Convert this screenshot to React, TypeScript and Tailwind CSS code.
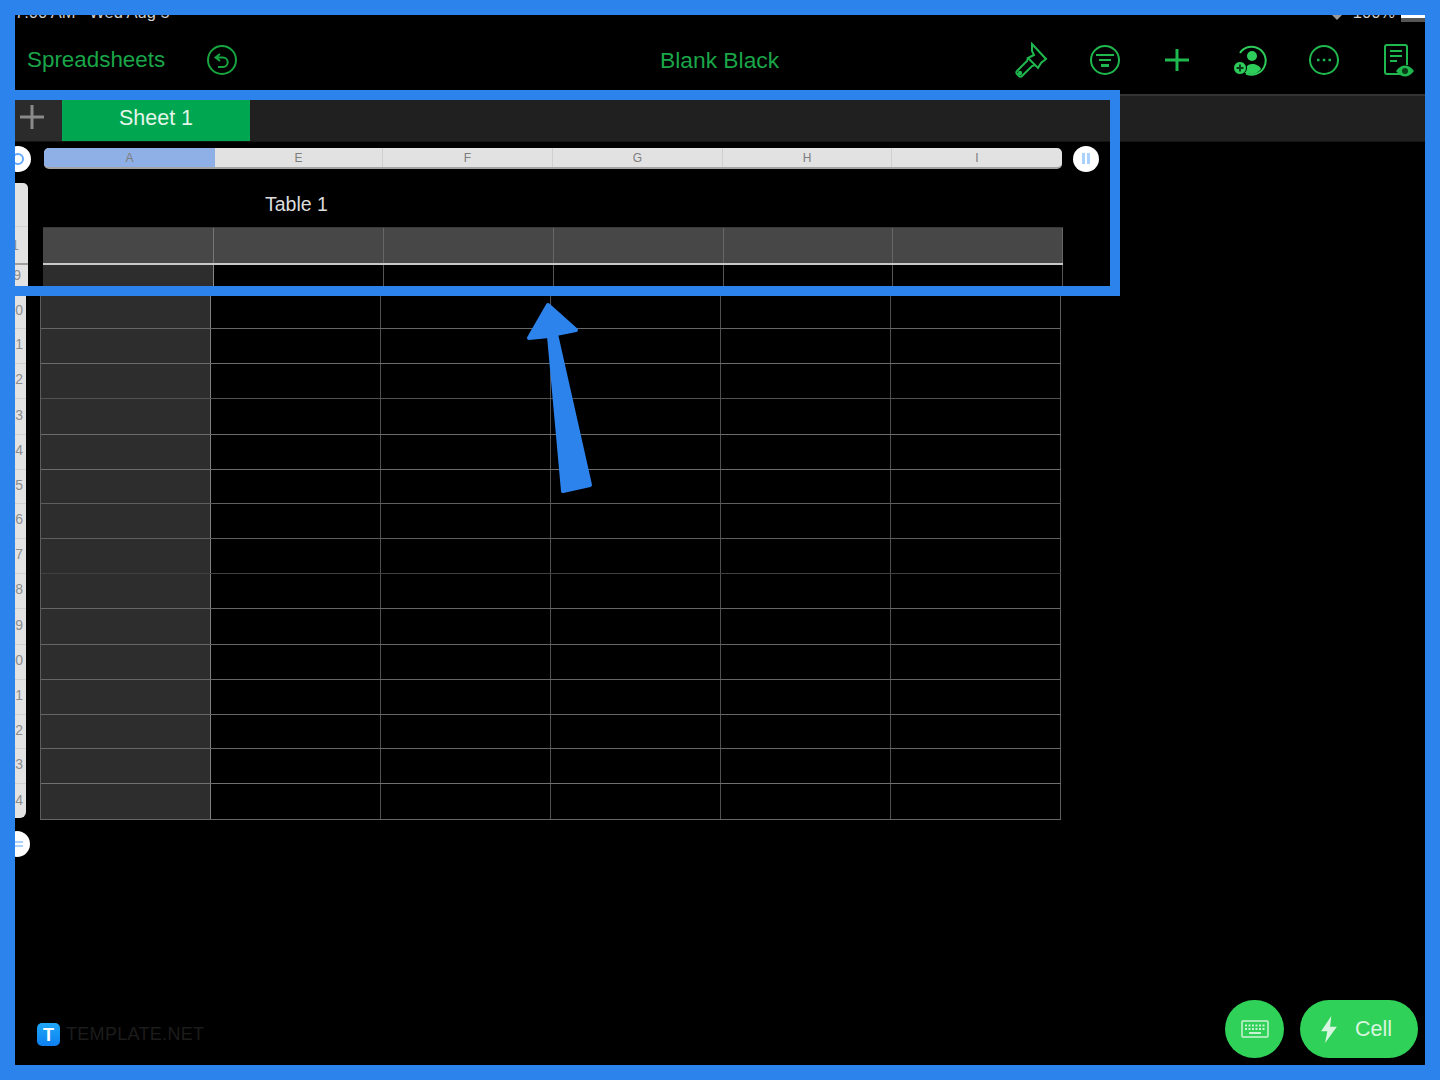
import React from 'react';

const lowerRows = [
  { label: '0', cls: 'h-[33px] border-[#666666]' },
  { label: '1', cls: 'h-[35px] border-[#6c6c6c]' },
  { label: '2', cls: 'h-[35px] border-[#525252]' },
  { label: '3', cls: 'h-[36px] border-[#6c6c6c]' },
  { label: '4', cls: 'h-[35px] border-[#6c6c6c]' },
  { label: '5', cls: 'h-[34px] border-[#5e5e5e]' },
  { label: '6', cls: 'h-[35px] border-[#5e5e5e]' },
  { label: '7', cls: 'h-[35px] border-[#404040]' },
  { label: '8', cls: 'h-[35px] border-[#666666]' },
  { label: '9', cls: 'h-[36px] border-[#666666]' },
  { label: '0', cls: 'h-[35px] border-[#666666]' },
  { label: '1', cls: 'h-[35px] border-[#666666]' },
  { label: '2', cls: 'h-[34px] border-[#666666]' },
  { label: '3', cls: 'h-[35px] border-[#707070]' },
  { label: '4', cls: 'h-[36px] border-[#666666]' },
];

const columns = [
  { label: 'A', cls: 'w-[171px] bg-[#8fb0e6] text-[#4d5f80]' },
  { label: 'E', cls: 'w-[168px] border-r border-[#d0d0d0]' },
  { label: 'F', cls: 'w-[170px] border-r border-[#d0d0d0]' },
  { label: 'G', cls: 'w-[170px] border-r border-[#d0d0d0]' },
  { label: 'H', cls: 'w-[169px] border-r border-[#d0d0d0]' },
  { label: 'I', cls: 'w-[170px]' },
];

const upperCells = ['w-[170px]', 'w-[170px]', 'w-[170px]', 'w-[169px]', 'w-[170px]'];

const Icon = ({ children, className }: { children: React.ReactNode; className?: string }) => (
  <svg viewBox="0 0 36 36" fill="none" stroke="currentColor" strokeWidth={2} className={`w-9 h-9 ${className ?? 'text-[#1fb84f]'}`}>
    {children}
  </svg>
);

const Toolbar = () => (
  <div className="h-[79px] shrink-0 flex flex-col">
    <div className="h-[7px] flex justify-between overflow-hidden text-[#cfcfcf] text-[16.500px] leading-[7px] font-['Liberation_Sans',sans-serif]">
      <span className="-mt-[6px]">7:00 AM&nbsp;&nbsp;&nbsp;Wed Aug 5</span>
      <div className="flex items-start">
        <svg viewBox="0 0 12 6" className="w-[12px] h-[6px] mr-[10px] text-[#999999]" fill="currentColor">
          <path d="M1 0h10L6 5z" />
        </svg>
        <span className="-mt-[6px] mr-[6px]">100%</span>
        <div className="w-[24px] h-[7px] bg-[#555555] border-t-[3px] border-white" />
      </div>
    </div>
    <div className="relative flex-1 flex items-center pt-[4px] pl-[12px] pr-[11px] font-['Liberation_Sans',sans-serif]">
      <span className="text-[22.400px] text-[#1aa648]">Spreadsheets</span>
      <Icon className="ml-[39px] text-[#17a53f]">
        <circle cx="18" cy="18" r="14" />
        <path d="M16 12l-4.500 3.500 4.500 3.500M12 15.500h7a4.700 4.700 0 0 1 0 9.400h-5" />
      </Icon>
      <span className="absolute left-[645px] text-[22.800px] text-[#1aa648]">Blank Black</span>
      <div className="ml-auto flex items-center">
        <Icon>
          <path d="M19 2L33 17 28 21 25 26 15 16 21 13 19 9z" />
          <path d="M15 16l-1 3-10 10a2 2 0 0 0 0 3l2 2a2 2 0 0 0 3 0l10-10 3-1" />
          <circle cx="7" cy="31" r="1.200" fill="currentColor" />
        </Icon>
        <Icon className="ml-[38px] text-[#1fb84f]">
          <circle cx="18" cy="18" r="14" />
          <path d="M9 13h18M12 18h12" />
          <path d="M14 23.500h8" strokeWidth={3} />
        </Icon>
        <Icon className="ml-[36px] text-[#1fb84f]">
          <path d="M18 7v22M6 18h24" strokeWidth={3} />
        </Icon>
        <Icon className="ml-[36px] text-[#2ecc5a]">
          <path d="M9 11a14 14 0 1 1 6 20.500" />
          <circle cx="21" cy="14" r="5" fill="currentColor" stroke="none" />
          <path d="M13 31c1-6 4-9 8-9s8 2 9 5c-2 3-6 5-9 5z" fill="currentColor" stroke="none" />
          <circle cx="9" cy="26" r="6.500" fill="currentColor" stroke="#000" strokeWidth={1} />
          <path d="M9 22.500v7M5.500 26h7" stroke="#0a3a18" strokeWidth={2} />
        </Icon>
        <Icon className="ml-[39px] text-[#1fb84f]">
          <circle cx="18" cy="18" r="14" />
          <path d="M11 18h2.500M16.800 18h2.500M22.500 18h2.500" strokeWidth={2.500} />
        </Icon>
        <Icon className="ml-[36px] text-[#1fb84f]">
          <path d="M22 32H9a2 2 0 0 1-2-2V5a2 2 0 0 1 2-2h18a2 2 0 0 1 2 2v18" />
          <path d="M12 9h12M12 14h12M12 19h7" />
          <path d="M18 29c3-4 6-5.500 9-5.500s6 1.500 9 5.500c-3 4-6 5.500-9 5.500s-6-1.500-9-5.500z" fill="currentColor" stroke="none" />
          <circle cx="27" cy="29" r="3" fill="#0a3a18" stroke="none" />
        </Icon>
      </div>
    </div>
  </div>
);

const TabBar = () => (
  <div className="h-[48px] shrink-0 flex bg-[#202020] border-t-2 border-b border-t-[#333333] border-b-[#141414] font-['Liberation_Sans',sans-serif]">
    <div className="w-[47px] bg-[#2b2b2b] flex items-center justify-center pr-[13px] pb-[3px]">
      <svg viewBox="0 0 24 24" className="w-6 h-6 text-[#8a8a8a]" stroke="currentColor" strokeWidth={3} fill="none">
        <path d="M12 0v24M0 12h24" />
      </svg>
    </div>
    <div className="w-[188px] bg-[#00a650] flex items-center justify-center text-[21.500px] text-[#e4f5ea]">
      Sheet 1
    </div>
  </div>
);

const Handle = ({ className, children }: { className: string; children: React.ReactNode }) => (
  <div className={`w-[26px] h-[26px] shrink-0 rounded-full bg-white flex items-center justify-center ${className}`}>
    {children}
  </div>
);

const ColumnBar = () => (
  <div className="h-[21px] mt-[6px] shrink-0 flex items-center font-['Liberation_Sans',sans-serif]">
    <Handle className="-ml-[10px]">
      <div className="w-[12px] h-[12px] rounded-full border-2 border-[#64a9ff]" />
    </Handle>
    <div className="ml-[13px] w-[1018px] h-[21px] flex rounded-[5px] overflow-hidden bg-[#e2e2e2] border-b-2 border-[#a3a3a3]">
      {columns.map((c) => (
        <div key={c.label} className={`flex items-center justify-center text-[12px] text-[#7d7d7d] ${c.cls}`}>
          {c.label}
        </div>
      ))}
    </div>
    <Handle className="ml-[11px]">
      <div className="flex gap-[2px]">
        <div className="w-[3px] h-[11px] bg-[#a9d2ff]" />
        <div className="w-[3px] h-[11px] bg-[#a9d2ff]" />
      </div>
    </Handle>
  </div>
);

const UpperTable = () => (
  <div className="flex mt-[14px] shrink-0 font-['Liberation_Sans',sans-serif]">
    <div className="w-[13px] flex flex-col bg-[#e3e3e3] rounded-tr-[5px] text-[14px] text-[#8e8e8e] overflow-hidden">
      <div className="h-[44px] border-b border-[#d4d4d4]" />
      <div className="h-[38px] pr-[9px] flex items-center justify-end border-b-2 border-[#9f9f9f]">1</div>
      <div className="h-[31px] pr-[7px] flex justify-end">9</div>
    </div>
    <div className="ml-[15px] flex flex-col">
      <div className="h-[44px] flex items-center pl-[222px] text-[19.500px] text-[#dddddd]">Table 1</div>
      <div className="h-[38px] flex bg-[#474747] border-t border-[#3a3a3a] border-b-2 border-b-[#c8c8c8]">
        <div className="w-[171px] border-r border-[#777777]" />
        {upperCells.map((w, i) => (
          <div key={i} className={`${w} border-r border-[#666666]`} />
        ))}
      </div>
      <div className="h-[31px] flex">
        <div className="w-[171px] bg-[#2d2d2d] border-r border-[#888888]" />
        {upperCells.map((w, i) => (
          <div key={i} className={`${w} border-r border-[#555555]`} />
        ))}
      </div>
    </div>
  </div>
);

const LowerTable = () => (
  <div className="flex shrink-0 font-['Liberation_Sans',sans-serif]">
    <div className="w-[11px] h-[522px] overflow-hidden flex flex-col bg-[#e3e3e3] rounded-br-[6px] text-[14px] text-[#8e8e8e]">
      {lowerRows.map((r, i) => (
        <div key={i} className={`${r.cls} shrink-0 border-b !border-[#d0d0d0] flex items-center justify-end pr-[3px] pb-[3px]`}>
          {r.label}
        </div>
      ))}
    </div>
    <div className="ml-[14px] border-l border-[#5c5c5c]">
      {lowerRows.map((r, i) => (
        <div key={i} className={`${r.cls} flex border-b`}>
          <div className="w-[170px] bg-[#2d2d2d] border-r border-[#808080]" />
          <div className="w-[170px] border-r border-[#505050]" />
          <div className="w-[170px] border-r border-[#505050]" />
          <div className="w-[170px] border-r border-[#505050]" />
          <div className="w-[170px] border-r border-[#505050]" />
          <div className="w-[170px] border-r border-[#5c5c5c]" />
        </div>
      ))}
    </div>
  </div>
);

const BottomBar = () => (
  <div className="flex-1 flex items-end justify-between pl-[22px] pr-[7px] pb-[7px] font-['Liberation_Sans',sans-serif]">
    <div className="flex items-center gap-[6px] mb-[10px]">
      <div className="w-[23px] h-[23px] rounded-[5px] bg-gradient-to-b from-[#20a8f8] to-[#0f7ff0] flex items-center justify-center text-white text-[18px] font-bold leading-none">
        T
      </div>
      <span className="text-[18px] tracking-[0.300px] text-[#1c1c1c]">TEMPLATE.NET</span>
    </div>
    <div className="flex items-center gap-[16px]">
      <div className="w-[59px] h-[58px] rounded-full bg-[#30d158] flex items-center justify-center">
        <svg viewBox="0 0 28 20" className="w-[28px] h-[20px] text-[#c9f2d4]" fill="none" stroke="currentColor">
          <rect x="1" y="2" width="26" height="16" rx="1" strokeWidth={1.500} />
          <path d="M4 6.500h20M4 10h20" strokeWidth={2} strokeDasharray="2 1.500" />
          <path d="M8 14h12" strokeWidth={2} />
        </svg>
      </div>
      <div className="w-[118px] h-[58px] rounded-full bg-[#30d158] flex items-center pl-[20px] text-[#d8f5df]">
        <svg viewBox="0 0 16 24" className="w-[18px] h-[27px]" fill="currentColor">
          <path d="M10 0L1 13.500h5.500L4.500 24 15 9.500H9z" />
        </svg>
        <span className="ml-[17px] text-[21.500px]">Cell</span>
      </div>
    </div>
  </div>
);

export default function App() {
  return (
    <div className="relative w-[1440px] h-[1080px] box-border border-[15px] border-[#2d83ec] bg-black overflow-hidden flex flex-col">
      <Toolbar />
      <TabBar />
      <ColumnBar />
      <UpperTable />
      <LowerTable />
      <Handle className="-ml-[11px] mt-[11px]">
        <div className="w-[12px] flex flex-col gap-[2px]">
          <div className="h-[2px] bg-[#a9d2ff]" />
          <div className="h-[2px] bg-[#a9d2ff]" />
        </div>
      </Handle>
      <BottomBar />

      {/* highlight box and arrow sit on top of the screenshot */}
      <div className="absolute left-0 top-[75px] w-[1105px] h-[206px] border-[10px] border-l-0 border-[#2d83ec]" />
      <svg className="absolute left-[490px] top-[270px] w-[100px] h-[220px]" viewBox="505 285 100 220" fill="#2d83ec" stroke="#2d83ec" strokeWidth={4} strokeLinejoin="round">
        <path d="M548 305L576 330 556 334 590 485 563 491 549 336 529 338z" />
      </svg>
    </div>
  );
}
